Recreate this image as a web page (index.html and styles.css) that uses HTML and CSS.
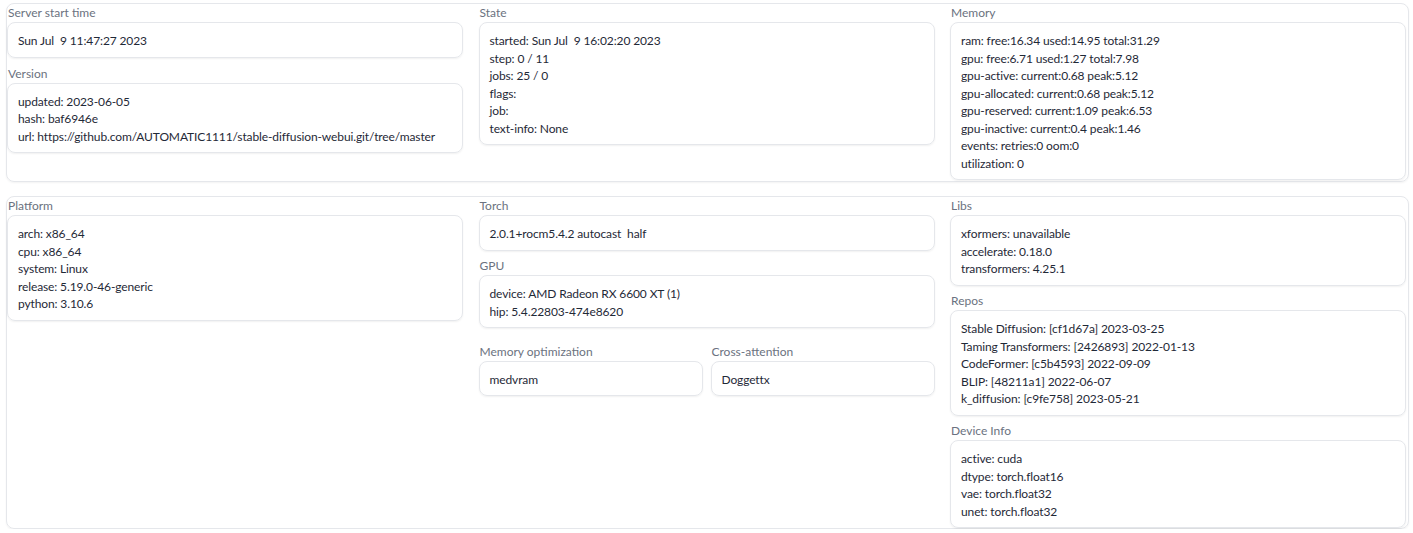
FILE: index.html
```html
<!DOCTYPE html>
<html>
<head>
<meta charset="utf-8">
<link rel="stylesheet" href="styles.css">
</head>
<body>
<div class="page">
  <section class="panel">
    <div class="col">
      <div class="group">
        <div class="label">Server start time</div>
        <div class="box"><div>Sun Jul&nbsp; 9 11:47:27 2023</div></div>
      </div>
      <div class="group">
        <div class="label">Version</div>
        <div class="box">
          <div>updated: 2023-06-05</div>
          <div>hash: baf6946e</div>
          <div>url: https://github.com/AUTOMATIC1111/stable-diffusion-webui.git/tree/master</div>
        </div>
      </div>
    </div>
    <div class="col">
      <div class="group">
        <div class="label">State</div>
        <div class="box">
          <div>started: Sun Jul&nbsp; 9 16:02:20 2023</div>
          <div>step: 0 / 11</div>
          <div>jobs: 25 / 0</div>
          <div>flags:</div>
          <div>job:</div>
          <div>text-info: None</div>
        </div>
      </div>
    </div>
    <div class="col">
      <div class="group">
        <div class="label">Memory</div>
        <div class="box">
          <div>ram: free:16.34 used:14.95 total:31.29</div>
          <div>gpu: free:6.71 used:1.27 total:7.98</div>
          <div>gpu-active: current:0.68 peak:5.12</div>
          <div>gpu-allocated: current:0.68 peak:5.12</div>
          <div>gpu-reserved: current:1.09 peak:6.53</div>
          <div>gpu-inactive: current:0.4 peak:1.46</div>
          <div>events: retries:0 oom:0</div>
          <div>utilization: 0</div>
        </div>
      </div>
    </div>
  </section>

  <section class="panel panel-b">
    <div class="col">
      <div class="group">
        <div class="label">Platform</div>
        <div class="box">
          <div>arch: x86_64</div>
          <div>cpu: x86_64</div>
          <div>system: Linux</div>
          <div>release: 5.19.0-46-generic</div>
          <div>python: 3.10.6</div>
        </div>
      </div>
    </div>
    <div class="col">
      <div class="group">
        <div class="label">Torch</div>
        <div class="box"><div>2.0.1+rocm5.4.2 autocast&nbsp; half</div></div>
      </div>
      <div class="group">
        <div class="label">GPU</div>
        <div class="box">
          <div>device: AMD Radeon RX 6600 XT (1)</div>
          <div>hip: 5.4.22803-474e8620</div>
        </div>
      </div>
      <div class="row">
        <div class="group">
          <div class="label">Memory optimization</div>
          <div class="box"><div>medvram</div></div>
        </div>
        <div class="group">
          <div class="label">Cross-attention</div>
          <div class="box"><div>Doggettx</div></div>
        </div>
      </div>
    </div>
    <div class="col">
      <div class="group">
        <div class="label">Libs</div>
        <div class="box">
          <div>xformers: unavailable</div>
          <div>accelerate: 0.18.0</div>
          <div>transformers: 4.25.1</div>
        </div>
      </div>
      <div class="group">
        <div class="label">Repos</div>
        <div class="box">
          <div>Stable Diffusion: [cf1d67a] 2023-03-25</div>
          <div>Taming Transformers: [2426893] 2022-01-13</div>
          <div>CodeFormer: [c5b4593] 2022-09-09</div>
          <div>BLIP: [48211a1] 2022-06-07</div>
          <div>k_diffusion: [c9fe758] 2023-05-21</div>
        </div>
      </div>
      <div class="group">
        <div class="label">Device Info</div>
        <div class="box">
          <div>active: cuda</div>
          <div>dtype: torch.float16</div>
          <div>vae: torch.float32</div>
          <div>unet: torch.float32</div>
        </div>
      </div>
    </div>
  </section>
</div>
</body>
</html>
```

FILE: styles.css
```css
html, body {
  margin: 0;
  padding: 0;
  background: #ffffff;
}
body {
  font-family: Lato, "Liberation Sans", sans-serif;
  color: #1f2937;
}
.page {
  padding: 3px 4px 0 6px;
  display: flex;
  flex-direction: column;
  gap: 14px;
}
.panel {
  border: 1px solid #e5e7eb;
  border-radius: 8px;
  box-shadow: 0 1px 2px rgba(0,0,0,0.05);
  display: grid;
  grid-template-columns: repeat(3, 456px);
  column-gap: 15.5px;
  padding: 0 1px 1px 0;
  align-items: start;
}
.panel-b {
  padding-bottom: 0;
}
.col {
  display: flex;
  flex-direction: column;
  gap: 7px;
}
.panel-b .col {
  gap: 6.5px;
}
.label {
  font-size: 12px;
  line-height: 18px;
  color: #6b7280;
  padding-left: 1px;
}
.box {
  border: 1px solid #e5e7eb;
  border-radius: 8px;
  box-shadow: 0 1px 2px rgba(0,0,0,0.06);
  padding: 8px 10px;
  font-size: 12px;
  line-height: 17.5px;
  letter-spacing: -0.12px;
}
.box div {
  position: relative;
  top: 1px;
}
.row {
  display: grid;
  grid-template-columns: 1fr 1fr;
  column-gap: 8px;
  margin-top: 8px;
}
```
